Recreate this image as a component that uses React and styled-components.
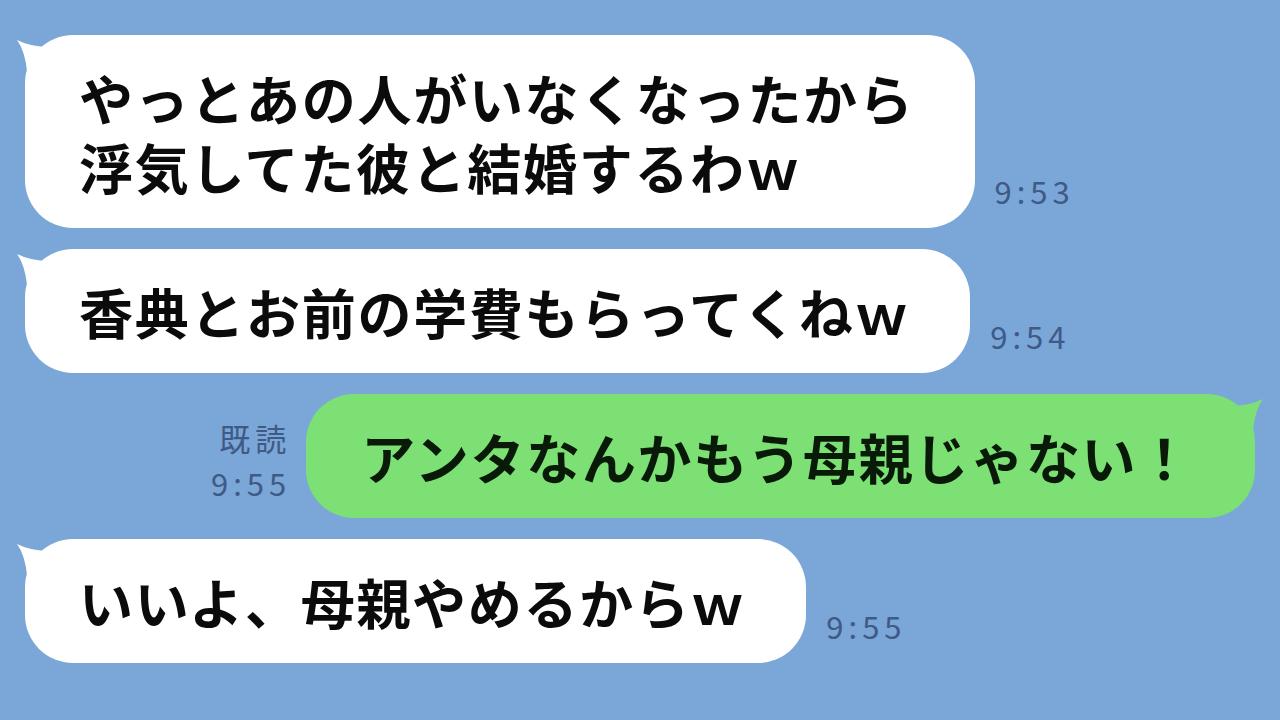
import styled, { createGlobalStyle } from 'styled-components';

const GlobalStyle = createGlobalStyle`
  html, body {
    margin: 0;
    padding: 0;
    background: #7ba6d8;
  }
  body {
    font-family: "Noto Sans CJK JP", "Noto Sans", sans-serif;
  }
`;

const messages = [
  { id: 1, side: 'left', lines: ['やっとあの人がいなくなったから', '浮気してた彼と結婚するわｗ'], time: '9:53' },
  { id: 2, side: 'left', lines: ['香典とお前の学費もらってくねｗ'], time: '9:54' },
  { id: 3, side: 'right', lines: ['アンタなんかもう母親じゃない！'], time: '9:55', read: true },
  { id: 4, side: 'left', lines: ['いいよ、母親やめるからｗ'], time: '9:55' },
];

export default function App() {
  return (
    <>
      <GlobalStyle />
      <Chat>
        {messages.map((m) => (
          <Row key={m.id} $side={m.side}>
            {m.side === 'right' && (
              <Meta $side="right">
                {m.read && <Stamp>既読</Stamp>}
                <Stamp>{m.time}</Stamp>
              </Meta>
            )}
            <Bubble $side={m.side}>
              <Tail $side={m.side} viewBox="0 0 40 40" aria-hidden="true">
                <path d="M12 36 Q10 16 2 5 Q16 12 34 12 L34 36 Z" />
              </Tail>
              <Text>
                {m.lines.map((line, i) => (
                  <span key={i}>
                    {i > 0 && <br />}
                    {line}
                  </span>
                ))}
              </Text>
            </Bubble>
            {m.side === 'left' && (
              <Meta $side="left">
                <Stamp>{m.time}</Stamp>
              </Meta>
            )}
          </Row>
        ))}
      </Chat>
    </>
  );
}

const Chat = styled.main`
  width: 1280px;
  height: 720px;
  box-sizing: border-box;
  padding: 35px 25px 0 25px;

  display: flex;
  flex-direction: column;
  gap: 21px;
`;

const Row = styled.div`
  display: flex;
  align-items: flex-end;
  justify-content: ${(p) => (p.$side === 'right' ? 'flex-end' : 'flex-start')};
  gap: 20px;
`;

const Bubble = styled.div`
  position: relative;
  box-sizing: border-box;
  padding: ${(p) => (p.$side === 'right' ? '27.5px 62px 27.5px 55px' : '27.5px 60px 27.5px 54px')};
  border-radius: 48px;
  background: ${(p) => (p.$side === 'right' ? '#7ce075' : '#ffffff')};
  color: ${(p) => (p.$side === 'right' ? '#0a1a08' : '#0b0b0b')};
  fill: ${(p) => (p.$side === 'right' ? '#7ce075' : '#ffffff')};
`;

const Tail = styled.svg`
  position: absolute;
  top: 0;
  width: 40px;
  height: 40px;
  ${(p) =>
    p.$side === 'right'
      ? 'right: -10px; transform: scaleX(-1);'
      : 'left: -10px;'}
`;

const Text = styled.p`
  position: relative;
  margin: 0;
  font-size: 54px;
  font-weight: 700;
  line-height: 69px;
  letter-spacing: 1.7px;
  white-space: nowrap;
`;

const Meta = styled.div`
  display: flex;
  flex-direction: column;
  align-items: ${(p) => (p.$side === 'right' ? 'flex-end' : 'flex-start')};
  margin-bottom: ${(p) => (p.$side === 'right' ? '13px' : '15px')};
  color: #3e5a85;
  font-size: 31px;
  line-height: 45px;
`;

const Stamp = styled.span`
  letter-spacing: 5px;
  margin-right: -5px;
`;
